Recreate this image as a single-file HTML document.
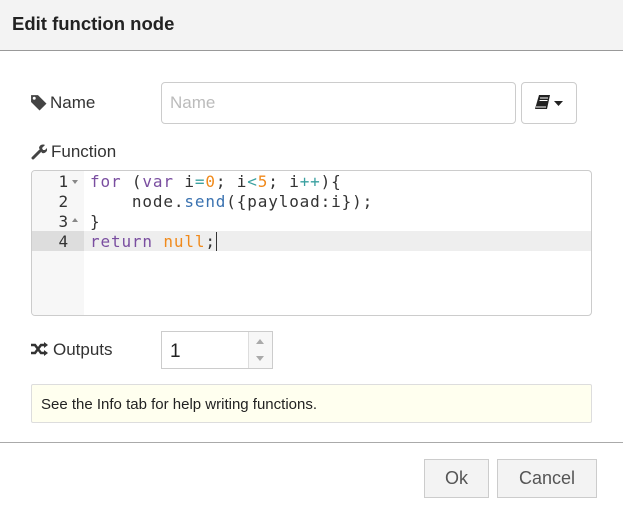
<!DOCTYPE html>
<html><head><style>
*{box-sizing:border-box;margin:0;padding:0}
body{width:623px;height:514px;background:#fff;font-family:"Liberation Sans",sans-serif;color:#333;position:relative;overflow:hidden}
.a{position:absolute}
.hdr{left:0;top:0;width:623px;height:51px;background:#f3f3f3;border-bottom:1px solid #999}
.hdr span{position:absolute;left:12px;top:13px;font-size:18.5px;font-weight:bold;color:#222}
.lbl{font-size:17px;color:#333}
.inp{border:1px solid #ccc;border-radius:4px;background:#fff}
.code{font-family:"DejaVu Sans Mono","Liberation Mono",monospace;font-size:16px;letter-spacing:0.85px;line-height:20px;white-space:pre}
.k{color:#7a4ea0}.n{color:#f08a1c}.o{color:#3aa0a0}.f{color:#3a72b0}
.btn{border:1px solid #ccc;background:#f3f3f3;font-size:18px;color:#555;text-align:center;line-height:36px}
</style></head><body>
<div class="a hdr"><span>Edit function node</span></div>

<svg class="a" style="left:30px;top:94px" width="17" height="17" viewBox="0 0 16 16"><path d="M1 1h6.5l8 8-6.5 6.5-8-8z" fill="#444"/><circle cx="4" cy="4" r="1.4" fill="#fff"/></svg>
<div class="a lbl" style="left:50px;top:93px">Name</div>
<div class="a inp" style="left:161px;top:82px;width:355px;height:42px"><span style="position:absolute;left:8px;top:10px;font-size:17px;color:#bbb">Name</span></div>
<div class="a inp" style="left:521px;top:82px;width:56px;height:42px">
<svg style="position:absolute;left:12px;top:11px" width="32" height="18" viewBox="0 0 32 18"><path d="M5 1h11l-3 14H1z" fill="#222"/><path d="M6 4h8M5.5 6.5h8" stroke="#fff" stroke-width="1"/><path d="M2 13h10" stroke="#fff" stroke-width="1"/><path d="M20 7h9l-4.5 5z" fill="#222"/></svg>
</div>

<svg class="a" style="left:31px;top:144px" width="16" height="16" viewBox="0 0 16 16"><path d="M2 14l7-7" stroke="#444" stroke-width="3" stroke-linecap="round"/><path d="M8 4a4 4 0 0 1 6-3l-3 3 1 2 2 0 2-2a4 4 0 0 1-5 5z" fill="#444"/></svg>
<div class="a lbl" style="left:51px;top:142px">Function</div>

<div class="a" style="left:31px;top:170px;width:561px;height:146px;border:1px solid #ccc;border-radius:4px;overflow:hidden">
<div class="a" style="left:0;top:0;width:52px;height:146px;background:#f7f7f7"></div>
<div class="a" style="left:0;top:60px;width:52px;height:20px;background:#ddd"></div>
<div class="a" style="left:52px;top:60px;width:509px;height:20px;background:#eee"></div>
<div class="a code" style="left:0;top:1px;width:37px;text-align:right;color:#333">1
2
3
4</div>
<div class="a" style="left:40px;top:9px;width:0;height:0;border-left:3px solid transparent;border-right:3px solid transparent;border-top:4px solid #888"></div>
<div class="a" style="left:40px;top:47px;width:0;height:0;border-left:3px solid transparent;border-right:3px solid transparent;border-bottom:4px solid #888"></div>
<div class="a code" style="left:58px;top:1px;color:#333"><span class="k">for</span> (<span class="k">var</span> i<span class="o">=</span><span class="n">0</span>; i<span class="o">&lt;</span><span class="n">5</span>; i<span class="o">++</span>){
    node.<span class="f">send</span>({payload:i});
}
<span class="k">return</span> <span class="n">null</span>;<span style="border-left:1px solid #333"></span></div>
</div>

<svg class="a" style="left:30px;top:342px" width="18" height="14" viewBox="0 0 18 14"><path d="M1 3h4l6 8h4M1 11h4l6-8h4" stroke="#333" stroke-width="2.5" fill="none"/><path d="M14 0l4 3-4 3zM14 8l4 3-4 3z" fill="#333"/></svg>
<div class="a lbl" style="left:53px;top:340px">Outputs</div>
<div class="a" style="left:161px;top:331px;width:112px;height:38px;border:1px solid #ccc;background:#fff">
<span style="position:absolute;left:8px;top:9px;font-size:19px;color:#222">1</span>
<div style="position:absolute;left:86px;top:0;width:24px;height:36px;background:#f7f7f7;border-left:1px solid #ddd"></div>
<div style="position:absolute;left:94px;top:7px;border-left:4px solid transparent;border-right:4px solid transparent;border-bottom:5px solid #aaa"></div>
<div style="position:absolute;left:94px;top:24px;border-left:4px solid transparent;border-right:4px solid transparent;border-top:5px solid #aaa"></div>
</div>

<div class="a" style="left:31px;top:384px;width:561px;height:39px;border:1px solid #ddd;border-radius:2px;background:#ffffef"><span style="position:absolute;left:9px;top:11px;font-size:15px;color:#222">See the Info tab for help writing functions.</span></div>

<div class="a" style="left:0;top:442px;width:623px;height:1px;background:#aaa"></div>
<div class="a btn" style="left:424px;top:459px;width:65px;height:39px">Ok</div>
<div class="a btn" style="left:497px;top:459px;width:100px;height:39px">Cancel</div>
</body></html>
